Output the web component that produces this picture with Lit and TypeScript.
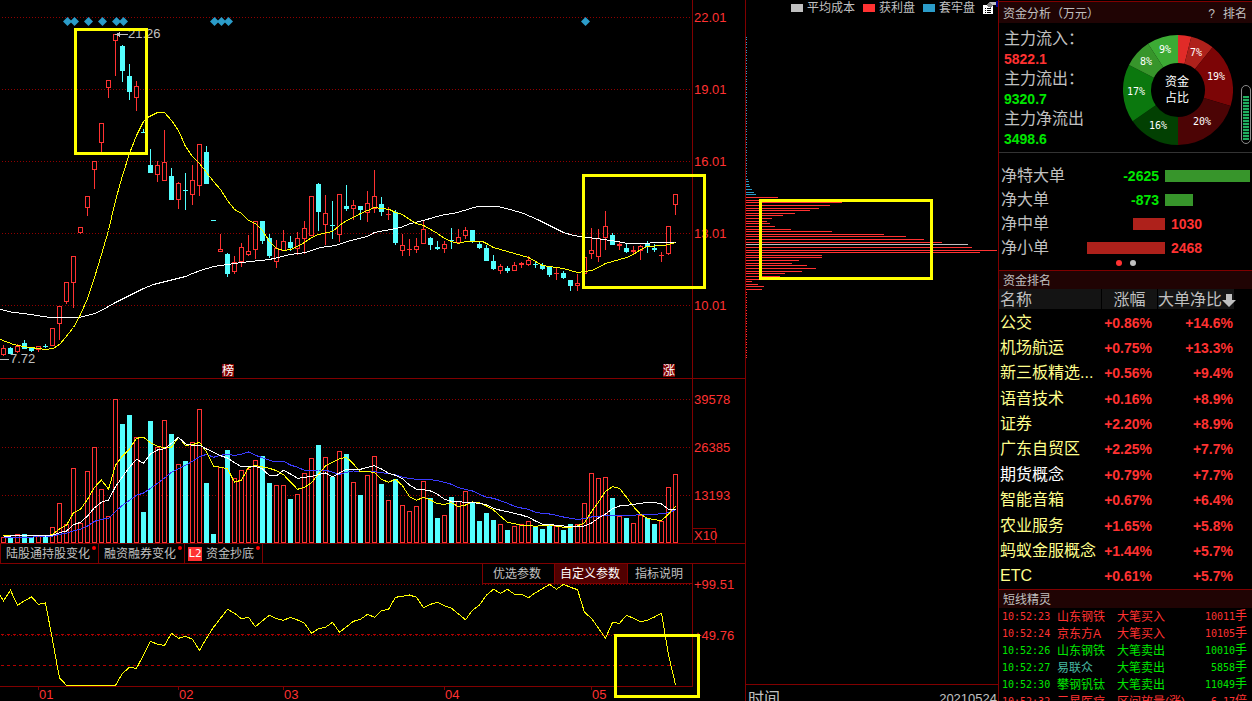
import { LitElement, html, svg, css } from "lit";
import { customElement, property } from "lit/decorators.js";
import { classMap } from "lit/directives/class-map.js";

type Candle = [string, number, number, number, number];
type Point = [number, number];

const STEP = 7;
const center = (i: number) => 3.5 + STEP * i;

// colour, high, body top, body bottom, low
const CANDLES: Candle[] = [
  ["r", 345, 348, 355, 356], ["c", 347, 348, 354, 354], ["r", 344, 346, 352, 353], ["c", 340, 343, 349, 349],
  ["c", 347, 347, 351, 352], ["r", 346, 346, 350, 352], ["c", 344, 346, 347, 348], ["r", 328, 328, 346, 346],
  ["r", 306, 306, 324, 340], ["r", 282, 282, 302, 304], ["r", 256, 256, 283, 308], ["r", 227, 227, 233, 234],
  ["r", 196, 196, 208, 216], ["r", 161, 161, 170, 189], ["r", 123, 123, 143, 152], ["r", 80, 80, 88, 98],
  ["r", 34, 34, 41, 76], ["c", 45, 46, 71, 82], ["c", 64, 76, 92, 100], ["r", 81, 86, 98, 111],
  ["c", 129, 132, 133, 133], ["c", 149, 165, 173, 173], ["r", 161, 165, 175, 182], ["r", 130, 162, 181, 181],
  ["c", 168, 176, 200, 200], ["r", 182, 183, 200, 209], ["c", 173, 190, 191, 210], ["r", 165, 180, 195, 205],
  ["r", 144, 144, 186, 196], ["c", 146, 152, 184, 184], ["c", 220, 220, 221, 221], ["r", 234, 249, 252, 252],
  ["c", 253, 254, 274, 277], ["r", 256, 262, 272, 274], ["r", 243, 247, 262, 267], ["r", 235, 251, 255, 256],
  ["r", 221, 221, 250, 259], ["c", 221, 221, 241, 244], ["c", 234, 238, 256, 258], ["r", 240, 248, 262, 268],
  ["r", 230, 241, 251, 251], ["c", 236, 242, 248, 251], ["r", 232, 238, 249, 255], ["r", 221, 228, 239, 254],
  ["r", 196, 196, 236, 236], ["c", 183, 184, 212, 231], ["r", 195, 213, 225, 245], ["c", 201, 225, 226, 239],
  ["r", 194, 194, 235, 242], ["c", 185, 206, 209, 211], ["r", 200, 205, 209, 220], ["c", 206, 206, 210, 220],
  ["r", 191, 203, 213, 222], ["r", 170, 196, 209, 213], ["c", 197, 204, 212, 216], ["r", 207, 214, 215, 220],
  ["c", 210, 212, 243, 245], ["r", 234, 245, 251, 256], ["r", 239, 249, 250, 256], ["r", 238, 246, 250, 253],
  ["r", 221, 229, 244, 244], ["c", 237, 238, 245, 250], ["c", 241, 247, 249, 250], ["r", 241, 244, 249, 253],
  ["c", 228, 240, 241, 249], ["r", 229, 237, 243, 244], ["r", 227, 230, 236, 239], ["c", 230, 230, 242, 243],
  ["c", 242, 244, 248, 249], ["c", 245, 248, 261, 261], ["c", 255, 261, 269, 270], ["r", 264, 266, 271, 274],
  ["c", 266, 268, 271, 273], ["r", 262, 265, 271, 271], ["r", 262, 263, 265, 268], ["r", 256, 260, 265, 266],
  ["c", 261, 264, 265, 268], ["c", 263, 265, 269, 270], ["c", 267, 267, 275, 277], ["r", 268, 273, 274, 280],
  ["c", 271, 273, 278, 279], ["c", 280, 280, 286, 291], ["r", 274, 283, 286, 291], ["r", 257, 257, 274, 274],
  ["r", 228, 250, 254, 259], ["r", 229, 238, 257, 262], ["r", 211, 226, 238, 250], ["c", 233, 235, 245, 245],
  ["r", 242, 244, 246, 250], ["c", 244, 248, 252, 253], ["r", 246, 250, 252, 254], ["r", 245, 246, 251, 260],
  ["c", 241, 243, 247, 253], ["c", 244, 248, 250, 252], ["r", 252, 255, 256, 262], ["r", 226, 226, 254, 255],
  ["r", 194, 194, 205, 215],
];

const VOLUME_TOPS = [
  537, 537, 534, 534, 537, 536, 537, 527, 503, 524, 468, 523, 471, 447, 489, 516, 399, 424, 415, 437,
  512, 421, 447, 420, 434, 464, 461, 442, 409, 483, 534, 467, 450, 478, 470, 469, 460, 456, 483, 485,
  485, 499, 494, 473, 458, 445, 457, 477, 451, 454, 482, 495, 475, 456, 484, 500, 479, 505, 511, 506,
  481, 498, 518, 515, 497, 501, 491, 502, 521, 513, 520, 524, 530, 526, 524, 521, 526, 529, 525, 526,
  530, 524, 524, 503, 473, 478, 477, 498, 516, 518, 523, 515, 518, 524, 521, 487, 474,
];

const PRICE_FAST: Point[] = [
  [0, 339], [13, 344], [23, 346], [45, 349], [53, 348], [60, 343], [73, 327], [80, 314], [87, 298], [94, 277],
  [101, 254], [108, 230], [115, 200], [122, 175], [129, 153], [136, 135], [143, 121], [147, 117], [157, 112],
  [164, 112], [171, 120], [178, 130], [185, 146], [192, 156], [199, 163], [206, 172], [213, 181], [220, 189],
  [227, 200], [234, 209], [241, 213], [248, 220], [255, 223], [262, 230], [269, 241], [276, 248], [283, 250],
  [290, 249], [297, 246], [304, 242], [311, 237], [318, 234], [332, 231], [339, 225], [346, 220], [353, 217],
  [360, 213], [367, 210], [374, 207], [381, 208], [389, 209], [395, 212], [402, 214], [409, 219], [416, 223],
  [423, 225], [430, 229], [437, 233], [444, 238], [451, 241], [458, 243], [465, 241], [482, 241], [486, 243],
  [493, 247], [500, 249], [514, 253], [528, 257], [535, 261], [542, 265], [549, 266], [563, 268], [570, 270],
  [577, 272], [584, 271], [591, 270], [598, 267], [605, 263], [619, 259], [626, 257], [633, 254], [640, 249],
  [647, 246], [663, 245], [668, 244], [675, 242],
];

const PRICE_SLOW: Point[] = [
  [0, 309], [13, 312], [23, 313], [50, 317], [78, 317], [87, 315], [94, 313], [101, 310], [108, 306], [115, 302],
  [129, 295], [143, 288], [153, 284], [185, 276], [192, 273], [200, 270], [213, 266], [227, 264], [241, 262],
  [269, 259], [290, 254], [305, 252], [320, 247], [335, 245], [350, 240], [367, 236], [374, 232], [390, 229],
  [400, 227], [410, 223], [423, 220], [440, 215], [457, 212], [470, 208], [477, 206], [497, 206], [510, 209],
  [523, 213], [537, 219], [553, 227], [563, 232], [573, 235], [587, 237], [603, 239], [617, 241], [627, 243],
  [647, 243], [652, 242], [675, 242],
];

// Series below are stored in thirds of a unit beneath their panel's base line.
const VOL_5 = [
  466, 468, 467, 467, 468, 467, 468, 463, 447, 436, 398, 388, 358, 322, 300, 328, 256, 228, 207, 175,
  172, 188, 199, 203, 202, 172, 196, 194, 187, 215, 258, 262, 266, 307, 300, 263, 256, 261, 265, 272,
  284, 306, 328, 322, 308, 282, 258, 247, 236, 232, 252, 276, 275, 277, 298, 307, 298, 317, 350, 361,
  352, 360, 371, 373, 368, 380, 375, 366, 368, 378, 390, 409, 427, 431, 436, 436, 439, 436, 435, 438,
  442, 442, 438, 428, 395, 366, 334, 320, 325, 352, 380, 403, 415, 419, 422, 402, 379,
];
const VOL_10 = [
  468, 468, 466, 466, 466, 466, 468, 466, 458, 453, 434, 427, 408, 383, 367, 360, 320, 290, 262, 238,
  250, 222, 210, 206, 190, 172, 192, 196, 196, 207, 217, 227, 234, 248, 260, 260, 259, 267, 287, 287,
  271, 282, 295, 292, 289, 284, 279, 290, 279, 268, 268, 268, 262, 257, 267, 280, 286, 296, 315, 328,
  329, 333, 343, 358, 364, 364, 368, 368, 370, 374, 385, 391, 395, 400, 405, 412, 423, 433, 433, 436,
  438, 440, 440, 438, 429, 414, 402, 386, 378, 376, 373, 370, 367, 367, 372, 388, 388,
];
const VOL_20 = [
  472, 472, 472, 472, 472, 468, 468, 468, 463, 460, 452, 448, 438, 424, 418, 415, 394, 376, 361, 346,
  339, 325, 310, 294, 277, 266, 256, 244, 230, 223, 232, 226, 223, 226, 223, 216, 226, 233, 241, 246,
  244, 255, 262, 271, 273, 270, 270, 277, 283, 277, 273, 275, 275, 275, 278, 281, 284, 292, 295, 298,
  298, 299, 302, 307, 313, 323, 328, 333, 343, 352, 355, 362, 370, 379, 384, 388, 397, 400, 402, 406,
  411, 415, 418, 416, 411, 409, 406, 406, 406, 406, 406, 403, 403, 403, 401, 398, 389,
];
const INDICATOR = [
  122, 91, 136, 122, 111, 133, 129, 240, 354, 376, 376, 376, 376, 376, 376, 376, 376, 340, 322, 325,
  285, 244, 253, 256, 220, 235, 229, 238, 271, 235, 202, 175, 148, 160, 176, 172, 200, 182, 166, 176,
  181, 172, 180, 190, 220, 206, 202, 187, 217, 200, 184, 178, 163, 172, 152, 148, 112, 109, 105, 112,
  143, 133, 127, 137, 145, 162, 179, 151, 135, 105, 88, 100, 88, 103, 103, 113, 98, 86, 73, 88,
  73, 82, 89, 157, 175, 205, 235, 187, 190, 166, 175, 185, 181, 171, 160, 285, 374,
];

const CHIPS = [
  32, 20, 96, 84, 73, 64, 49, 37, 26, 21, 24, 29, 45, 86, 138, 160, 178, 196, 222, 226, 251, 234, 76, 76,
  53, 46, 61, 70, 56, 39, 34, 15, 6, 12, 18, 16,
];
const CHIPS_UPPER = [10, 8, 6, 4, 3, 3, 2];

const toPoints = (pts: Point[]) => pts.map(([x, y]) => `${x + 0.5},${y + 0.5}`).join(" ");
const series = (values: number[], base: number) =>
  values.map((v, i) => `${center(i)},${(base + v / 3).toFixed(1)}`).join(" ");

const chartStyles = css`
  :host { display: block; }
  svg { display: block; width: 100%; height: auto; }
  text { font: 13px "Liberation Sans", "Noto Sans CJK SC", sans-serif; }
  .axis { fill: #ff3232; }
  .note { fill: #c0c0c0; }
  .tag { fill: #fff; font-size: 12px; }
  .tag-bg { fill: #800000; }
  .frame { stroke: #800000; fill: none; shape-rendering: crispEdges; }
  .dots { stroke: #900000; stroke-dasharray: 1 2; shape-rendering: crispEdges; }
  .dashes { stroke: #b00000; stroke-dasharray: 3 3; shape-rendering: crispEdges; }
  .line { fill: none; shape-rendering: crispEdges; }
  .yellow { stroke: #ffff00; }
  .white { stroke: #fff; }
  .blue { stroke: #3c3cff; }
  .up { fill: #000; stroke: #ff3232; shape-rendering: crispEdges; }
  .down { fill: #54ffff; shape-rendering: crispEdges; }
  .wick-up { stroke: #ff3232; shape-rendering: crispEdges; }
  .wick-down { stroke: #54ffff; shape-rendering: crispEdges; }
  .mark { fill: none; stroke: #ffff00; stroke-width: 3; shape-rendering: crispEdges; }
  .diamond { fill: #2b9cc9; }
  .arrow { stroke: #c0c0c0; fill: #c0c0c0; shape-rendering: crispEdges; }
`;

@customElement("price-chart")
class PriceChart extends LitElement {
  static styles = chartStyles;

  candle([kind, high, top, bottom, low]: Candle, i: number) {
    const x = center(i);
    if (kind === "c") {
      return svg`<path class="wick-down" d="M${x} ${high}V${low}"/>
        <rect class="down" x=${x - 2.5} y=${top} width="5" height=${bottom - top}></rect>`;
    }
    if (bottom - top < 2) {
      return svg`<path class="wick-up" d="M${x} ${high}V${low}M${x - 2.5} ${top + 0.5}h5"/>`;
    }
    return svg`<path class="wick-up" d="M${x} ${high}V${top}M${x} ${bottom}V${low}"/>
      <rect class="up" x=${x - 2} y=${top + 0.5} width="4" height=${bottom - top - 1}></rect>`;
  }

  render() {
    const levels: [string, number][] = [["22.01", 17], ["19.01", 89], ["16.01", 161], ["13.01", 233], ["10.01", 305]];
    const events = [67, 74, 88, 102, 116, 123, 214, 221, 228, 585];
    return html`<svg viewBox="0 0 746 379" role="img" aria-label="K线图">
      ${levels.map(([label, y]) => svg`<path class="dots" d="M2 ${y + 0.5}H692"/>
        <text class="axis" x="694" y=${y + 5}>${label}</text>`)}
      ${CANDLES.map((c, i) => this.candle(c, i))}
      <polyline class="line white" points=${toPoints(PRICE_SLOW)}></polyline>
      <polyline class="line yellow" points=${toPoints(PRICE_FAST)}></polyline>
      ${events.map((x) => svg`<path class="diamond" d="M${x + 0.5} 17l4.500 4.500l-4.500 4.500l-4.500 -4.500z"/>`)}
      <path class="arrow" d="M116 34.500H128M116 34.500l3 -1.500v3z"/>
      <text class="note" x="128" y="38">21.26</text>
      <path class="arrow" d="M0 359.500H9"/>
      <text class="note" x="10" y="363">7.72</text>
      <rect class="tag-bg" x="222" y="364" width="12" height="13"></rect>
      <text class="tag" x="222" y="375">榜</text>
      <rect class="tag-bg" x="663" y="364" width="12" height="13"></rect>
      <text class="tag" x="663" y="375">涨</text>
      <path class="frame" d="M692.500 0V379M745.500 0V379M0 378.500H746"/>
      <rect class="mark" x="75.500" y="29.500" width="71" height="124"></rect>
      <rect class="mark" x="583.500" y="175.500" width="121" height="112"></rect>
    </svg>`;
  }
}

@customElement("volume-chart")
class VolumeChart extends LitElement {
  static styles = chartStyles;
  render() {
    const levels: [string, number][] = [["39578", 399], ["26385", 447], ["13193", 495]];
    return html`<svg viewBox="0 379 746 165" role="img" aria-label="成交量">
      ${levels.map(([label, y]) => svg`<path class="dots" d="M2 ${y + 0.5}H692"/>
        <text class="axis" x="694" y=${y + 5}>${label}</text>`)}
      ${VOLUME_TOPS.map((top, i) => CANDLES[i][0] === "c"
        ? svg`<rect class="down" x=${center(i) - 2.5} y=${top} width="5" height=${543 - top}></rect>`
        : svg`<rect class="up" x=${center(i) - 2} y=${top + 0.5} width="4" height=${542 - top}></rect>`)}
      <polyline class="line blue" points=${series(VOL_20, 380)}></polyline>
      <polyline class="line yellow" points=${series(VOL_5, 380)}></polyline>
      <polyline class="line white" points=${series(VOL_10, 380)}></polyline>
      <path class="frame" d="M692.500 379V544M745.500 379V544M0 543.500H746M692.500 528.500H715.500V543"/>
      <text class="axis" x="694" y="540">X10</text>
    </svg>`;
  }
}

@customElement("indicator-chart")
class IndicatorChart extends LitElement {
  static styles = chartStyles;
  render() {
    const months: [string, number][] = [["01", 38], ["02", 178], ["03", 283], ["04", 444], ["05", 591]];
    return html`<svg viewBox="0 564 746 137" role="img" aria-label="资金抄底">
      <path class="dots" d="M2 584.500H692M2 635.500H692"/>
      <path class="dashes" d="M1 634.500H692M1 665.500H675"/>
      <path class="frame" d="M692.500 564V687M745.500 564V701M0 686.500H692"/>
      ${months.map(([label, x]) => svg`<path class="frame" d="M${x + 0.5} 686V690"/>
        <text class="axis" x=${x + 1} y="699">${label}</text>`)}
      <text class="axis" x="694" y="589">+99.51</text>
      <text class="axis" x="694" y="640">+49.76</text>
      <polyline class="line yellow" points=${"0,595.5 " + series(INDICATOR, 560)}></polyline>
      <rect class="mark" x="615.500" y="635.500" width="83" height="61"></rect>
    </svg>`;
  }
}

@customElement("chip-chart")
class ChipChart extends LitElement {
  static styles = [chartStyles, css`
    rect { shape-rendering: crispEdges; }
    .lock { fill: #2b9cc9; }
    .gain { fill: #ff3232; }
    .mean { fill: #c0c0c0; }
  `];
  render() {
    const y = (k: number) => Math.round(197 + k * 2.63);
    const row = (k: number, w: number, cls: string) =>
      svg`<rect class=${cls} x="0" y=${y(k)} width=${w} height="1"></rect>`;
    const upper = Array.from({ length: 61 }, (_, n) => row(-1 - n, CHIPS_UPPER[n] ?? 1, "lock"));
    const lower = Array.from({ length: 26 }, (_, n) => row(CHIPS.length + n, 1, "gain"));
    return html`<svg viewBox="0 16 252 669" role="img" aria-label="筹码分布">
      ${upper}${CHIPS.map((w, k) => row(k, w, k === 18 ? "mean" : "gain"))}${lower}
      <path class="frame" d="M0 684.500H252"/>
      <rect class="mark" x="14.500" y="200.500" width="171" height="78"></rect>
    </svg>`;
  }
}

@customElement("fund-donut")
class FundDonut extends LitElement {
  static styles = css`
    :host { display: block; width: 110px; height: 110px; }
    svg { display: block; width: 100%; height: 100%; }
    text { fill: #fff; text-anchor: middle; font: 10px "DejaVu Sans Mono", monospace; }
    .title { font: 12px "Noto Sans CJK SC", sans-serif; }
  `;
  render() {
    const slices: [number, number, string][] = [
      [0, 14, "#e12b28"], [14, 39, "#ae211b"], [39, 107, "#7c0506"], [107, 180, "#4c0405"],
      [180, 235.5, "#024002"], [235.5, 297, "#0b780e"], [297, 327, "#37952b"], [327, 360, "#3cab34"],
    ];
    const labels: [string, number, number][] = [
      ["9%", 42, 18], ["7%", 73, 21], ["19%", 93, 45], ["20%", 79, 90], ["16%", 35, 94], ["17%", 13, 60], ["8%", 23, 30],
    ];
    const at = (r: number, deg: number) => {
      const a = (deg * Math.PI) / 180;
      return `${(55 + r * Math.sin(a)).toFixed(2)} ${(55 - r * Math.cos(a)).toFixed(2)}`;
    };
    return html`<svg viewBox="0 0 110 110" role="img" aria-label="资金占比">
      ${slices.map(([from, to, fill]) => svg`<path fill=${fill}
        d="M${at(55, from)}A55 55 0 0 1 ${at(55, to)}L${at(27, to)}A27 27 0 0 0 ${at(27, from)}Z"/>`)}
      ${labels.map(([t, x, y]) => svg`<text x=${x} y=${y}>${t}</text>`)}
      <text class="title" x="54" y="51">资金</text>
      <text class="title" x="54" y="67">占比</text>
    </svg>`;
  }
}

@customElement("fund-panel")
class FundPanel extends LitElement {
  static styles = css`
    :host { display: block; padding-top: 1px; color: #c0c0c0; font: 12px/20px "Liberation Sans", "Noto Sans CJK SC", sans-serif; }
    button { border: 0; padding: 0; background: none; color: inherit; font: inherit; }
    h2 { margin: 0; font: inherit; }
    .bar { display: flex; align-items: center; box-sizing: border-box; height: 19px; padding: 2px 5px 0 4px; border-top: 1px solid #800000; background: #200404; }
    .bar.first { height: 22px; }
    .bar h2 { flex: 1; }
    .bar .help { margin-right: 8px; }
    .summary { display: flex; height: 123px; padding: 6px 0 0 5px; box-sizing: border-box; }
    .figures { flex: 1; margin: 0; }
    .figures dt { font-size: 16px; }
    .figures dd { margin: 0; font-weight: bold; font-size: 14px; }
    .donut { margin: 6px 8px 0 0; }
    .meter { width: 6px; height: 44px; margin: 56px 1px 0 0; padding: 10px 1px 3px; border: 1px solid #8c8c8c; border-radius: 5px; }
    .meter div { height: 100%; background: repeating-linear-gradient(#20b060 0 2px, #042010 2px 3px); }
    .up { color: #ff3232; }
    .down { color: #00e600; }
    .nets { margin: 6px 0 0; padding: 11px 0 0; border-top: 1px solid #333; }
    .net { display: grid; grid-template-columns: 166px 1fr; height: 24px; align-items: center; }
    .left, .right { display: flex; align-items: center; }
    .left { justify-content: space-between; }
    .net-name { padding-left: 2px; font-size: 16px; }
    .net-value { font-weight: bold; font-size: 14px; margin: 0 6px; }
    .fill-up { height: 12px; background: #ae211b; }
    .fill-down { height: 12px; background: #37952b; }
    .pager { display: flex; gap: 8px; height: 10px; padding-left: 117px; }
    .pager button { width: 6px; height: 6px; border-radius: 3px; background: #c0c0c0; }
    .pager .on { background: #ff3232; }
    table { display: block; width: 100%; }
    thead, tbody { display: grid; }
    tr { display: grid; grid-template-columns: 102px 55px 76px; column-gap: 1px; align-items: center; }
    thead tr { height: 20px; align-items: stretch; }
    tbody { grid-template-rows: repeat(11, 1fr); height: 280px; padding-top: 1px; box-sizing: border-box; }
    th, td { padding: 0; text-align: left; white-space: nowrap; font-weight: normal; font-size: 16px; }
    th { background: #141414; line-height: 22px; height: 20px; }
    th:first-child, td:first-child { padding-left: 1px; }
    th:nth-child(2) { text-align: center; }
    th button { display: flex; align-items: center; }
    th svg { flex: none; width: 14px; height: 14px; }
    td:first-child { color: #ffff8c; }
    td.plain { color: #fff; }
    td.num { text-align: right; font-weight: bold; font-size: 14px; }
    td.num.last { padding-right: 1px; }
    td.num.mid { padding-right: 5px; }
    .ticker { display: grid; grid-template-rows: repeat(6, 1fr); height: 100px; margin: 0; padding: 0; list-style: none; }
    .tick { display: grid; grid-template-columns: 55px 60px 1fr 60px; align-items: center; padding: 0 5px 0 3px; line-height: 16px; white-space: nowrap; }
    .mono { font-family: "DejaVu Sans Mono", "Noto Sans CJK SC", monospace; font-size: 10px; }
    .unit { font-size: 12px; }
    .amount { text-align: right; }
    .teal { color: #46b8a0; }
  `;

  render() {
    const nets: [string, number, number][] = [["净特大单", -2625, 85], ["净大单", -873, 28], ["净中单", 1030, 32], ["净小单", 2468, 78]];
    const ranks = [
      ["公交", "+0.86%", "+14.6%"], ["机场航运", "+0.75%", "+13.3%"], ["新三板精选...", "+0.56%", "+9.4%"],
      ["语音技术", "+0.16%", "+8.9%"], ["证券", "+2.20%", "+8.9%"], ["广东自贸区", "+2.25%", "+7.7%"],
      ["期货概念", "+0.79%", "+7.7%"], ["智能音箱", "+0.67%", "+6.4%"], ["农业服务", "+1.65%", "+5.8%"],
      ["蚂蚁金服概念", "+1.44%", "+5.7%"], ["ETC", "+0.61%", "+5.7%"],
    ];
    const ticks = [
      ["up", "10:52:23", "山东钢铁", "大笔买入", "10011", "手"], ["up", "10:52:24", "京东方A", "大笔买入", "10105", "手"],
      ["down", "10:52:26", "山东钢铁", "大笔卖出", "10010", "手"], ["down", "10:52:27", "易联众", "大笔卖出", "5858", "手"],
      ["down", "10:52:30", "攀钢钒钛", "大笔卖出", "11049", "手"], ["up", "10:52:32", "三星医疗", "区间放量(涨)", "6.17", "倍"],
    ];
    return html`
      <header class="bar first"><h2>资金分析（万元）</h2><button class="help">?</button><button>排名</button></header>
      <section class="summary">
        <dl class="figures">
          <dt>主力流入：</dt><dd class="up">5822.1</dd>
          <dt>主力流出：</dt><dd class="down">9320.7</dd>
          <dt>主力净流出</dt><dd class="down">3498.6</dd>
        </dl>
        <fund-donut class="donut"></fund-donut>
        <div class="meter"><div></div></div>
      </section>
      <section class="nets">
        ${nets.map(([name, v, w]) => html`<div class="net">
          <div class="left"><span class="net-name">${name}</span>${v < 0
            ? html`<span class="net-value down">${v}</span>`
            : html`<div class="fill-up" style="width:${w}px"></div>`}</div>
          <div class="right">${v < 0
            ? html`<div class="fill-down" style="width:${w}px"></div>`
            : html`<span class="net-value up">${v}</span>`}</div>
        </div>`)}
        <div class="pager"><button class="on" aria-label="1"></button><button aria-label="2"></button></div>
      </section>
      <header class="bar"><h2>资金排名</h2></header>
      <table>
        <thead><tr><th>名称</th><th>涨幅</th><th><button>大单净比<svg viewBox="0 0 14 14"><path fill="#c0c0c0" d="M4 1h6v6h4L7 14L0 7h4z"/></svg></button></th></tr></thead>
        <tbody>${ranks.map(([name, pct, ratio]) => html`<tr>
          <td class=${classMap({ plain: name === "期货概念" })}>${name}</td>
          <td class="num mid up">${pct}</td><td class="num last up">${ratio}</td></tr>`)}</tbody>
      </table>
      <header class="bar"><h2>短线精灵</h2></header>
      <ul class="ticker">${ticks.map(([kind, time, name, act, n, unit]) => html`<li class="tick ${kind}">
        <span class="mono">${time}</span><span class=${classMap({ teal: name === "易联众" })}>${name}</span>
        <span>${act}</span><span class="amount"><span class="mono">${n}</span><span class="unit">${unit}</span></span></li>`)}</ul>
    `;
  }
}

@customElement("app-root")
class AppRoot extends LitElement {
  @property({ type: Number }) selected = 1;

  static styles = css`
    :host {
      display: grid; grid-template-columns: minmax(0, 746fr) minmax(0, 253fr) 253px;
      height: 100vh; overflow: hidden; background: #000; color: #c0c0c0;
      font: 12px/18px "Liberation Sans", "Noto Sans CJK SC", sans-serif;
    }
    button { padding: 0; border: 0; background: none; color: inherit; font: inherit; white-space: nowrap; }
    .tabs { display: flex; box-sizing: border-box; height: 20px; border: 1px solid #800000; border-width: 0 1px 1px; }
    .tab { position: relative; display: flex; align-items: center; gap: 4px; padding: 1px 8px 0 5px; border-right: 1px solid #800000; }
    .tab.badged { padding: 1px 8px 0 3px; }
    .tab::after { content: ""; position: absolute; top: 2px; right: 2px; width: 4px; height: 4px; border-radius: 2px; background: #ff0000; }
    .badge { width: 14px; background: #ff3232; color: #fff; font: 11px/14px "DejaVu Sans Mono", monospace; }
    .lower { position: relative; }
    .params { position: absolute; top: 0; right: 54px; display: flex; height: 20px; border-bottom: 1px solid #800000; box-sizing: border-box; }
    .params button { padding: 1px 13px 0 10px; border-left: 1px solid #800000; }
    .params .wide { padding: 1px 7px 0 5px; }
    .params .last { padding: 1px 9px 0 7px; }
    .params .on { background: #500000; color: #fff; }
    .chips { display: flex; flex-direction: column; border-right: 1px solid #800000; }
    .legend { display: flex; justify-content: flex-end; align-items: center; height: 16px; gap: 8px; }
    .key { display: flex; align-items: center; gap: 4px; line-height: 16px; }
    .swatch { width: 12px; height: 8px; }
    .mean { background: #c0c0c0; }
    .gain { background: #ff3232; }
    .lock { background: #2b9cc9; }
    .tool svg { display: block; width: 15px; height: 14px; }
    .foot { display: flex; justify-content: space-between; padding: 4px 1px 0 2px; font-size: 13px; line-height: 20px; }
    .foot .time { font-size: 16px; }
  `;

  render() {
    const params = ["优选参数", "自定义参数", "指标说明"];
    return html`
      <main>
        <price-chart></price-chart>
        <volume-chart></volume-chart>
        <nav class="tabs">
          <button class="tab">陆股通持股变化</button><button class="tab">融资融券变化</button>
          <button class="tab badged"><span class="badge">L2</span>资金抄底</button>
        </nav>
        <div class="lower">
          <indicator-chart></indicator-chart>
          <div class="params">${params.map((p, i) => html`<button
            class=${classMap({ on: i === this.selected, wide: i === 1, last: i === 2 })}>${p}</button>`)}</div>
        </div>
      </main>
      <section class="chips">
        <div class="legend">
          <span class="key"><span class="swatch mean"></span>平均成本</span>
          <span class="key"><span class="swatch gain"></span>获利盘</span>
          <span class="key"><span class="swatch lock"></span>套牢盘</span>
          <button class="tool" aria-label="设置"><svg viewBox="0 0 15 14" shape-rendering="crispEdges">
            <path fill="#fff" d="M0 4h10v9H0z"/><path stroke="#000" d="M2 7.500h1M4 7.500h4M2 9.500h1M4 9.500h4M2 11.500h1M4 11.500h4"/>
            <path fill="#808080" d="M3 4l3 -3h4v3l-2 3z"/><path fill="#c0c0c0" d="M7 1h6v3H9z"/><path fill="#000090" d="M13 0h2v6h-2z"/>
          </svg></button>
        </div>
        <chip-chart></chip-chart>
        <div class="foot"><span class="time">时间</span><span>20210524</span></div>
      </section>
      <fund-panel></fund-panel>
    `;
  }
}
